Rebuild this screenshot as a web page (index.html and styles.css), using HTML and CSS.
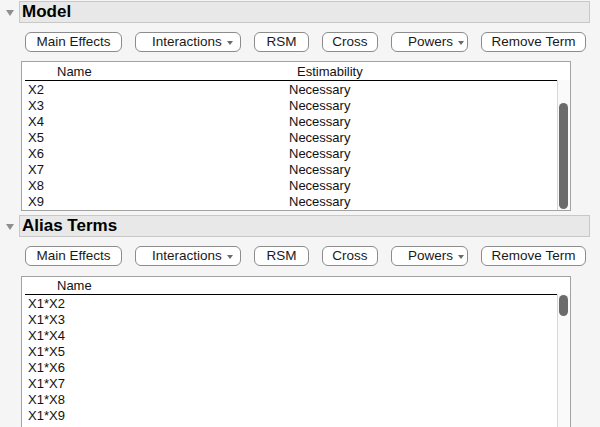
FILE: index.html
```html
<!DOCTYPE html>
<html>
<head>
<meta charset="utf-8">
<link rel="stylesheet" href="styles.css">
</head>
<body>
<div class="section">
  <div class="sec-head"><span class="disclosure"></span><div class="bar">Model</div></div>
  <div class="toolbar">
    <button class="btn w-main">Main Effects</button>
    <button class="btn drop w-inter">Interactions<span class="caret"></span></button>
    <button class="btn w-rsm">RSM</button>
    <button class="btn w-cross">Cross</button>
    <button class="btn drop w-pow">Powers<span class="caret"></span></button>
    <button class="btn w-rem">Remove Term</button>
  </div>
  <div class="list list-model">
    <div class="cols">
      <div class="thead"><span class="h1">Name</span><span class="h2">Estimability</span></div>
      <div class="row"><span class="d1">X2</span><span class="d2">Necessary</span></div>
      <div class="row"><span class="d1">X3</span><span class="d2">Necessary</span></div>
      <div class="row"><span class="d1">X4</span><span class="d2">Necessary</span></div>
      <div class="row"><span class="d1">X5</span><span class="d2">Necessary</span></div>
      <div class="row"><span class="d1">X6</span><span class="d2">Necessary</span></div>
      <div class="row"><span class="d1">X7</span><span class="d2">Necessary</span></div>
      <div class="row"><span class="d1">X8</span><span class="d2">Necessary</span></div>
      <div class="row"><span class="d1">X9</span><span class="d2">Necessary</span></div>
    </div>
    <div class="scroll">
      <div class="scroll-top"></div>
      <div class="track"><div class="thumb"></div></div>
    </div>
  </div>
</div>

<div class="section section-alias">
  <div class="sec-head"><span class="disclosure"></span><div class="bar">Alias Terms</div></div>
  <div class="toolbar">
    <button class="btn w-main">Main Effects</button>
    <button class="btn drop w-inter">Interactions<span class="caret"></span></button>
    <button class="btn w-rsm">RSM</button>
    <button class="btn w-cross">Cross</button>
    <button class="btn drop w-pow">Powers<span class="caret"></span></button>
    <button class="btn w-rem">Remove Term</button>
  </div>
  <div class="list list-alias">
    <div class="cols">
      <div class="thead"><span class="h1">Name</span></div>
      <div class="row"><span class="d1">X1*X2</span></div>
      <div class="row"><span class="d1">X1*X3</span></div>
      <div class="row"><span class="d1">X1*X4</span></div>
      <div class="row"><span class="d1">X1*X5</span></div>
      <div class="row"><span class="d1">X1*X6</span></div>
      <div class="row"><span class="d1">X1*X7</span></div>
      <div class="row"><span class="d1">X1*X8</span></div>
      <div class="row"><span class="d1">X1*X9</span></div>
    </div>
    <div class="scroll">
      <div class="scroll-top"></div>
      <div class="track"><div class="thumb"></div></div>
    </div>
  </div>
</div>
</body>
</html>
```

FILE: styles.css
```css
html, body {
  margin: 0;
  padding: 0;
  background: #f5f5f5;
  height: 427px;
  overflow: hidden;
}
body {
  padding-top: 1px;
  font-family: "Liberation Sans", Arial, sans-serif;
  color: #111;
}
.sec-head {
  display: flex;
  align-items: center;
  height: 22px;
}
.disclosure {
  width: 19px;
  display: flex;
  justify-content: center;
  padding-left: 1px;
  box-sizing: border-box;
}
.disclosure::before {
  content: "";
  border-left: 4px solid transparent;
  border-right: 4px solid transparent;
  border-top: 6px solid #8f8f8f;
  margin-top: 1px;
}
.bar {
  width: 571px;
  height: 22px;
  box-sizing: border-box;
  background: #e8e8e8;
  border: 1px solid #c8c8c8;
  font-weight: bold;
  font-size: 17px;
  line-height: 20px;
  padding-left: 2px;
  color: #000;
}
.toolbar {
  display: flex;
  gap: 13px;
  margin-top: 9px;
  padding-left: 25px;
  height: 20px;
}
.btn {
  height: 20px;
  box-sizing: border-box;
  border: 1px solid #8c8c8c;
  border-radius: 6px;
  background: #fff;
  font-family: "Liberation Sans", Arial, sans-serif;
  font-size: 13.5px;
  color: #1a1a1a;
  padding: 0;
  display: flex;
  align-items: center;
  justify-content: center;
  line-height: 18px;
}
.btn.drop {
  justify-content: flex-start;
  padding-left: 16px;
}
.caret {
  width: 0;
  height: 0;
  border-left: 3px solid transparent;
  border-right: 3px solid transparent;
  border-top: 4px solid #6a6a6a;
  margin-left: 5px;
  margin-top: 1px;
}
.w-main { width: 97px; }
.w-inter { width: 106px; }
.w-rsm { width: 55px; }
.w-cross { width: 56px; }
.w-pow { width: 77px; }
.w-rem { width: 105px; }

.list {
  display: flex;
  margin-left: 21px;
  width: 550px;
  box-sizing: border-box;
  border: 1px solid #a2a2a2;
  background: #fff;
  overflow: hidden;
}
.list-model {
  margin-top: 9px;
  height: 150px;
}
.list-alias {
  margin-top: 10px;
  height: 152px;
}
.section-alias {
  margin-top: 4px;
}
.cols {
  width: 532px;
  margin-left: 3px;
  font-size: 13px;
}
.thead {
  display: grid;
  grid-template-columns: 260px 1fr;
  height: 18px;
  line-height: 19px;
  border-bottom: 1px solid #000;
}
.list-alias .thead {
  height: 17px;
  line-height: 18px;
}
.h1 { padding-left: 32px; }
.h2 { padding-left: 12px; }
.row {
  display: grid;
  grid-template-columns: 260px 1fr;
  height: 16px;
  line-height: 18px;
}
.d1 { padding-left: 3px; }
.d2 { padding-left: 4px; }

.scroll {
  width: 13px;
  display: flex;
  flex-direction: column;
}
.scroll-top {
  height: 18px;
  background: #fff;
}
.list-alias .scroll-top {
  height: 17px;
}
.track {
  flex: 1;
  border-left: 1px solid #d6d6d6;
  background: #fafafa;
  padding-left: 1px;
}
.thumb {
  width: 9px;
  border-radius: 5px;
  background: #6b6b6b;
}
.list-model .thumb {
  margin-top: 23px;
  height: 106px;
}
.list-alias .thumb {
  margin-top: 1px;
  height: 21px;
}
```
